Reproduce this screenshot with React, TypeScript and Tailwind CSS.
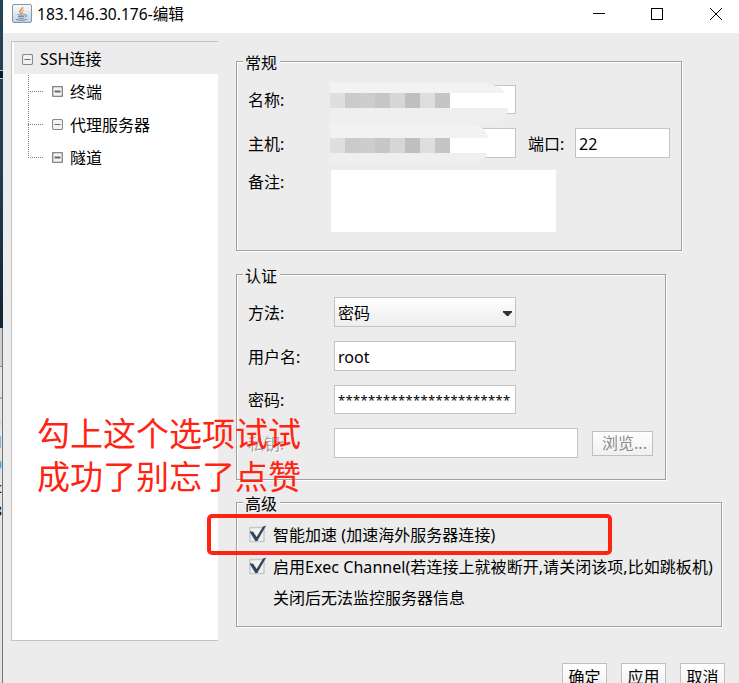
import { type ReactNode } from 'react';
import clsx from 'clsx';

const MOSAIC = ['bg-[#dfdfdf]', 'bg-[#cbcac8]', 'bg-[#cdcdcd]', 'bg-[#c6c6c4]', 'bg-[#d6d6d6]', 'bg-[#bfbfbf]', 'bg-[#dededc]', 'bg-[#c4c5c7]'];

function JavaIcon() {
    return (
        <svg width="20" height="20" viewBox="0 0 20 20" fill="none" className="shrink-0">
            <defs>
                <linearGradient id="tile" x1="0" y1="0" x2="0" y2="1">
                    <stop offset="0" stopColor="#fbfcfd" />
                    <stop offset="1" stopColor="#c3d2de" />
                </linearGradient>
            </defs>
            <rect x="0.5" y="0.5" width="19" height="18" rx="1.5" fill="url(#tile)" stroke="#8497a8" />
            <path d="M10.5 3C11 5 7.5 6 8 7.8C8.2 8.8 9.3 9.4 9.3 10.3" stroke="#ee8a3a" strokeWidth="1.6" />
            <path d="M12 6C10 6.8 9.8 7.6 10.5 8.6C10.9 9.3 10.8 9.8 10.2 10.4" stroke="#ee8a3a" />
            <path d="M5.5 10.5C7 11.4 11.5 11.4 13 10.5M6 12.6H12M6.5 14.3H11.6M4 15.2C5.5 16.6 13 16.6 14.8 15.2M13 11C15.6 10.6 15.2 12.8 12.8 13.2" stroke="#6488a5" />
        </svg>
    );
}

function TreeHandle({ bold }: { bold?: boolean }) {
    return (
        <svg width="11" height="11" viewBox="0 0 11 11" fill="none" className="shrink-0">
            <rect x="0.5" y="0.5" width="10" height="10" rx="1.5" fill="#f3f3f3" stroke="#85878a" strokeWidth={bold ? 1.6 : 1.1} />
            <path d="M2.5 5.5H8.5" stroke="#66686b" strokeWidth={bold ? 2 : 1} />
        </svg>
    );
}

function TreeItem({ label, bold }: { label: string; bold?: boolean }) {
    return (
        <div className="flex h-[33px] items-center">
            <svg width="16" height="1" className="mr-2 shrink-0">
                <path d="M0 0.5H16" stroke="#808080" strokeDasharray="1 1" />
            </svg>
            <TreeHandle bold={bold} />
            <span className="ml-[7px]">{label}</span>
        </div>
    );
}

function Group({ title, className, children }: { title: string; className: string; children: ReactNode }) {
    return (
        <section className={clsx('border border-[#a0a0a0] shadow-[1px_1px_0_#fff,inset_1px_1px_0_#fff]', className)}>
            <h2 className="-mt-[10px] ml-[6px] flex h-5 w-[37px] items-center bg-[#ececec] pl-[2px] pt-[2px]">{title}</h2>
            {children}
        </section>
    );
}

function Label({ children, className }: { children: ReactNode; className?: string }) {
    return <span className={clsx('w-[86px] shrink-0', className)}>{children}</span>;
}

function Field({ className, children }: { className: string; children?: ReactNode }) {
    return <div className={clsx('flex shrink-0 items-center border border-[#c4c4c4] bg-white pl-[3px]', className)}>{children}</div>;
}

function Redaction({ short }: { short?: boolean }) {
    return (
        <div className={clsx('absolute -left-[4px]', short ? '-top-[4px]' : '-top-[3px]')}>
            <div className={clsx('bg-[#f2f2f2]', short ? 'h-[14px] w-[158px] rounded-tr-[20px_14px]' : 'h-[11px] w-[174px] rounded-tr-[34px_11px]')} />
            <div className={clsx('flex h-[15px] bg-white', short ? 'w-[158px]' : 'w-[174px]')}>
                {MOSAIC.map((color) => (
                    <div key={color} className={clsx('w-[15px]', color)} />
                ))}
            </div>
            <div className={clsx('bg-[#efefef]', short ? 'h-[11px] w-[157px] rounded-br-[20px_11px]' : 'h-[16px] w-[178px] rounded-br-[20px_16px]')} />
        </div>
    );
}

function CheckMark() {
    return (
        <svg width="18" height="18" viewBox="0 0 18 18" fill="none" className="relative -top-px shrink-0">
            <rect x="1" y="2.5" width="14" height="14" fill="#f2f2f2" stroke="#c8c8c8" strokeWidth="1.5" />
            <path d="M0.5 6.5H4L7.6 12L14 1.6L17.2 0.6L8.3 16H6.3Z" fill="#30485d" />
        </svg>
    );
}

function Button({ children }: { children: ReactNode }) {
    return (
        <button className="h-[27px] w-[45px] border border-[#c0c0c0] bg-linear-to-b from-white to-[#f0f0f0] text-center leading-[26px]">
            {children}
        </button>
    );
}

export default function App() {
    return (
        <div className="relative flex h-[683px] w-[739px] overflow-hidden bg-[#ececec] font-['Noto_Sans','Noto_Sans_CJK_SC',sans-serif] text-[16px] leading-5 text-black">
            {/* Windows behind the dialog */}
            <div className="w-[3px] shrink-0">
                <div className="h-[328px] bg-linear-to-b from-[#24445a] via-[#1f3f55] to-[#142433] pt-[70px]">
                    <div className="h-[9px] border-y border-[#8cc5e8] bg-[#0d1a24]" />
                </div>
                <div className="h-[355px] border-r border-[#747474] bg-[#e4e4e4]">
                    <div className="h-[39px] border-b border-[#8a8a8a] bg-[#cfcfcf]" />
                    <div className="h-8 border-b-2 border-[#b4b4b4] bg-[#e2e2e2]" />
                    <div className="flex flex-col items-end overflow-hidden pt-2 text-[15px] leading-[23px]">
                        <span>名</span>
                        <span>口</span>
                        <span className="text-[#4a9ad4]">9</span>
                        <span>c</span>
                        <span>8</span>
                    </div>
                </div>
            </div>

            <div className="min-w-0 flex-1">
                <header className="flex h-[33px] items-start bg-white pl-[9px]">
                    <div className="flex h-[28px] items-center">
                        <JavaIcon />
                        <span className="ml-[5px] text-[15.6px]">183.146.30.176-编辑</span>
                    </div>
                    <svg width="130" height="14" viewBox="0 0 130 14" fill="none" stroke="black" className="ml-auto mr-4 mt-[7px]">
                        <path d="M0 6.5H12" />
                        <rect x="58.5" y="1.5" width="11" height="11" />
                        <path d="M117 1L129 13M129 1L117 13" />
                    </svg>
                </header>

                <div className="flex pl-2 pt-2">
                    {/* Connection tree */}
                    <nav className="h-[600px] w-[207px] shrink-0 border-b border-l border-t border-[#c4c4c4] bg-white pl-[2px]">
                        <div className="flex h-8 items-center bg-[#ececec] pb-[2px] pl-2 pt-1">
                            <TreeHandle />
                            <span className="ml-[7px]">SSH连接</span>
                        </div>
                        <div className="relative pl-[14px] pt-px">
                            <svg width="1" height="83" className="absolute left-[14px] top-px">
                                <path d="M0.5 0V83" stroke="#808080" strokeDasharray="1 1" />
                            </svg>
                            <TreeItem label="终端" bold />
                            <TreeItem label="代理服务器" />
                            <TreeItem label="隧道" bold />
                        </div>
                    </nav>

                    <main className="ml-[18px] pt-5">
                        <Group title="常规" className="h-[190px] w-[446px]">
                            <div className="mt-[13px] flex h-[29px] items-center pl-[11px]">
                                <Label>名称:</Label>
                                <div className="relative">
                                    <Field className="h-[29px] w-[182px]" />
                                    <Redaction />
                                </div>
                            </div>
                            <div className="mt-[14px] flex h-[30px] items-center pl-[11px]">
                                <Label className="pt-[2px]">主机:</Label>
                                <div className="relative">
                                    <Field className="h-[30px] w-[182px]" />
                                    <Redaction short />
                                </div>
                                <span className="ml-3 w-[47px] pt-[2px]">端口:</span>
                                <Field className="h-[30px] w-[95px] pt-[2px]">22</Field>
                            </div>
                            <div className="mt-3 flex pl-[11px]">
                                <span className="mt-[2px] w-[83px]">备注:</span>
                                <div className="h-[62px] w-[225px] bg-white" />
                            </div>
                        </Group>

                        <Group title="认证" className="mt-[23px] h-[206px] w-[430px]">
                            <div className="mt-3 flex items-center pl-[11px]">
                                <Label className="pt-[2px]">方法:</Label>
                                <div className="flex h-[30px] w-[182px] items-center justify-between border border-[#c4c4c4] bg-linear-to-b from-white to-[#ededed] pl-[3px] pr-[3px] pt-[2px]">
                                    密码
                                    <svg width="9" height="5" viewBox="0 0 9 5" fill="#333">
                                        <path d="M0 0H9V1.5L7.5 2.5L5.5 5H3.8L1.5 2.5L0 1.5Z" />
                                    </svg>
                                </div>
                            </div>
                            <div className="mt-[14px] flex items-center pl-[11px]">
                                <Label className="pt-[2px]">用户名:</Label>
                                <Field className="h-[30px] w-[182px] pt-[2px]">root</Field>
                            </div>
                            <div className="mt-[14px] flex items-center pl-[11px]">
                                <Label>密码:</Label>
                                <Field className="h-[29px] w-[182px] text-[13px] tracking-[0.34px]">***********************</Field>
                            </div>
                            <div className="mt-[14px] flex items-center pl-[11px]">
                                <Label className="pt-[2px] text-[#a0a0a0] [text-shadow:1px_1px_0_#fff]">私钥:</Label>
                                <Field className="h-[30px] w-[244px]" />
                                <button className="ml-[14px] h-[25px] w-[61px] border border-[#c0c0c0] bg-linear-to-b from-white to-[#f0f0f0] pl-1 text-[#8c8c8c]">
                                    浏览...
                                </button>
                            </div>
                        </Group>

                        <Group title="高级" className="mt-[22px] h-[125px] w-[486px]">
                            <div className="mt-3 flex h-5 items-center pl-3">
                                <CheckMark />
                                <span className="ml-[6px] whitespace-nowrap tracking-[0.03px]">智能加速 (加速海外服务器连接)</span>
                            </div>
                            <div className="mt-[12px] flex h-5 items-center pl-3">
                                <CheckMark />
                                <span className="ml-[6px] whitespace-nowrap tracking-[0.05px]">启用Exec Channel(若连接上就被断开,请关闭该项,比如跳板机)</span>
                            </div>
                            <p className="mt-[11px] pl-9">关闭后无法监控服务器信息</p>
                        </Group>

                        <div className="mt-9 flex gap-[14px] pl-[326px]">
                            <Button>确定</Button>
                            <Button>应用</Button>
                            <Button>取消</Button>
                        </div>
                    </main>
                </div>
            </div>

            {/* Red annotation over the dialog */}
            <p className="absolute left-[37px] top-[412px] whitespace-nowrap text-[33px] leading-[43px] text-[#ff2412]">
                勾上这个选项试试
                <br />
                成功了别忘了点赞
            </p>
            <div className="absolute left-[207px] top-[514px] h-[41px] w-[405px] rounded-[5px] border-4 border-[#ff2412]" />
        </div>
    );
}
